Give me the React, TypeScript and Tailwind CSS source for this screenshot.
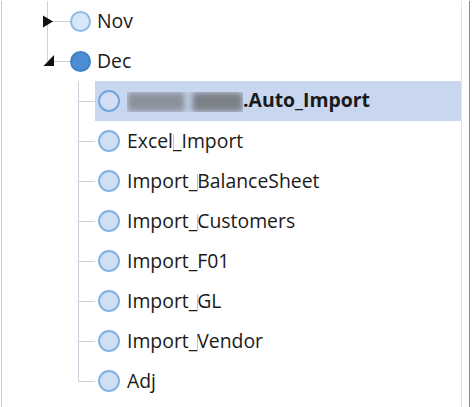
import React from 'react';

type Item = {
  label: React.ReactNode;
  selected?: boolean;
  last?: boolean;
};

const font = { fontFamily: '"Open Sans", "Noto Sans", sans-serif' };

// thin caret-like mark seen inside some labels
function Mark() {
  return <span className="inline-block w-px h-[16px] -mr-px bg-[#f2b47a] align-[-2px]" />;
}

function MonthRow({ label, expanded, last }: { label: string; expanded?: boolean; last?: boolean }) {
  return (
    <div className="flex h-10 items-center">
      <svg width="68" height="40" className="shrink-0">
        <line x1="45.5" y1="0" x2="45.5" y2={last ? 20 : 40} stroke="#c9d1dc" strokeWidth="1" />
        <line x1="45.5" y1="20.5" x2="68" y2="20.5" stroke="#c9d1dc" strokeWidth="1" />
        {expanded ? (
          <polygon points="52,14 52,25 41.5,25" fill="#111" />
        ) : (
          <polygon points="41,14.5 51,20.5 41,26.5" fill="#111" />
        )}
      </svg>
      <div
        className={
          expanded
            ? 'w-[21px] h-[21px] rounded-full border-2 border-[#3f7fc6] bg-[#4b8ed4] shrink-0'
            : 'w-[21px] h-[21px] rounded-full border-2 border-[#8dbbe8] bg-[#d8e7f8] shrink-0'
        }
      />
      <span className="ml-[6px] text-[19.4px] text-[#1a1a1a] leading-none">{label}</span>
    </div>
  );
}

function ChildRow({ label, selected, last }: Item) {
  return (
    <div className="flex h-10">
      <svg width="93" height="40" className="shrink-0">
        <line x1="76.5" y1="0" x2="76.5" y2={last ? 20.5 : 40} stroke="#c9d1dc" strokeWidth="1" />
        <line x1="76.5" y1="20.5" x2="93" y2="20.5" stroke="#c9d1dc" strokeWidth="1" />
      </svg>
      <div className={'flex flex-1 items-center pl-[3px] ' + (selected ? 'bg-[#c8d6f0]' : '')}>
        <div
          className={
            selected
              ? 'w-[22px] h-[22px] rounded-full border-2 border-[#6ea8df] bg-[#d3def2] shrink-0'
              : 'w-[22px] h-[22px] rounded-full border-2 border-[#82b3e4] bg-[#cfe0f4] shrink-0'
          }
        />
        <span className="ml-[7px] text-[19.4px] text-[#1a1a1a] leading-none whitespace-nowrap">{label}</span>
      </div>
    </div>
  );
}

export default function App() {
  const children: Item[] = [
    {
      label: (
        <>
          <span className="inline-flex w-[116px] gap-[7px] overflow-hidden align-middle">
            <span className="block h-[20px] w-[58px] bg-[#7d8086] blur-[3px] opacity-80" />
            <span className="block h-[20px] w-[51px] bg-[#6f7277] blur-[3px] opacity-85" />
          </span>
          <span className="font-bold">.Auto_Import</span>
        </>
      ),
      selected: true,
    },
    { label: <>Excel<Mark />_Import</> },
    { label: <>Import_<Mark />BalanceSheet</> },
    { label: <>Import_<Mark />Customers</> },
    { label: <>Import_F01</> },
    { label: <>Import_<Mark />GL</> },
    { label: <>Import_<Mark />Vendor</> },
    { label: 'Adj', last: true },
  ];

  return (
    <div className="flex h-[407px] w-[472px] bg-white overflow-hidden pt-px" style={font}>
      <div className="ml-px w-[461px] shrink-0 border-l border-r border-l-[#bccfe8] border-r-[#dde2e8]">
        <MonthRow label="Nov" />
        <MonthRow label="Dec" expanded last />
        {children.map((c, i) => (
          <ChildRow key={i} {...c} />
        ))}
      </div>
      <div className="ml-[7px] w-px bg-[#5f93d3]" />
    </div>
  );
}
